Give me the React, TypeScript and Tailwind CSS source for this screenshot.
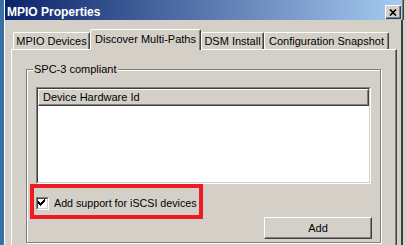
import React from "react"

const raised =
  "border-t border-l border-t-white border-l-white border-r border-b border-r-[#404040] border-b-[#404040] shadow-[inset_-1px_-1px_0_#808080]"

function CheckMark() {
  // classic 7x7 check glyph
  const rows = [
    [6, 1],
    [5, 2],
    [0, 1, 4, 3],
    [0, 2, 3, 3],
    [0, 5],
    [1, 3],
    [2, 1],
  ]
  return (
    <svg width="9" height="9" viewBox="0 0 9 9" shapeRendering="crispEdges">
      {rows.map((r, y) => {
        const rects = []
        for (let i = 0; i < r.length; i += 2) {
          rects.push(<rect key={i} x={r[i] + 1} y={y + 1} width={r[i + 1]} height={1} fill="#000" />)
        }
        return <g key={y}>{rects}</g>
      })}
    </svg>
  )
}

function Tab({ label, width, selected }: { label: string; width: string; selected?: boolean }) {
  if (selected) {
    return (
      <div
        className={`${width} h-[21px] -mb-[1px] relative z-10 bg-[#d4d0c8] border-t border-l border-white border-r border-r-[#404040] shadow-[inset_-1px_0_0_#808080] rounded-t-[2px] flex justify-center pt-[3px] whitespace-nowrap`}
      >
        {label}
      </div>
    )
  }
  return (
    <div
      className={`${width} h-[17px] bg-[#d4d0c8] border-t border-l border-white border-r border-r-[#404040] shadow-[inset_-1px_0_0_#808080] rounded-t-[2px] flex justify-center pt-[2px] whitespace-nowrap`}
    >
      {label}
    </div>
  )
}

export default function App() {
  return (
    <div className="w-[406px] h-[245px] overflow-hidden flex flex-col bg-[#d4d0c8] text-[11px] leading-[13px] text-black font-['Liberation_Sans',Arial,sans-serif]">
      {/* title bar */}
      <div className="h-[20px] w-[406px] shrink-0 flex">
        <div className="w-[4px] bg-[#3a6ea5]" />
        <div className="w-[1px] bg-white" />
        <div className="w-[397px] pt-[4px] pl-[2px] pr-[1px] flex items-center bg-[linear-gradient(to_right,#0a246a,#a6caf0)]">
          <span className="flex-1 text-white font-bold text-[12px] leading-[14px]">MPIO Properties</span>
          <div className="w-[16px] h-[14px] shrink-0 bg-[#d4d0c8] shadow-[inset_1px_1px_0_#fff,inset_-1px_-1px_0_#404040,inset_-2px_-2px_0_#808080] flex items-center justify-center">
            <svg width="8" height="7" viewBox="0 0 8 7" className="block w-[8px] h-[7px] shrink-0">
              <path d="M1 0.5L7 6.5M7 0.5L1 6.5" stroke="#000" strokeWidth="1.7" />
            </svg>
          </div>
        </div>
        <div className="w-[1px] bg-[#808080]" />
        <div className="w-[1px] bg-[#404040]" />
        <div className="flex-1 bg-[#d4d0c8]" />
      </div>

      <div className="flex-1 flex">
        <div className="w-[4px] shrink-0 bg-[#3a6ea5]" />
        <div className="w-[399px] shrink-0 flex flex-col border-l border-white border-r-2 border-r-[#404040] pl-[6px] pr-[4px]">
          {/* tabs */}
          <div className="mt-[9px] h-[20px] flex items-end pl-[2px]">
            <Tab label="MPIO Devices" width="w-[77px]" />
            <Tab label="Discover Multi-Paths" width="w-[111px]" selected />
            <Tab label="DSM Install" width="w-[63px]" />
            <Tab label="Configuration Snapshot" width="w-[125px]" />
          </div>

          {/* tab page */}
          <div className="flex-1 flex flex-col border-t border-l border-white border-r border-r-[#404040] shadow-[inset_-1px_0_0_#808080]">
            <div className="relative mt-[19px] ml-[14px] mr-[15px] border border-[#808080] shadow-[1px_1px_0_#fff,inset_1px_1px_0_#fff] flex flex-col pb-[3px]">
              <span className="absolute -top-[7px] left-[6px] px-[1px] bg-[#d4d0c8]">SPC-3 compliant</span>

              {/* list view */}
              <div className="mt-[17px] mx-[9px] h-[97px] border border-t-[#808080] border-l-[#808080] border-r-white border-b-white">
                <div className="h-full flex flex-col border border-t-[#404040] border-l-[#404040] border-r-[#d4d0c8] border-b-[#d4d0c8] bg-white">
                  <div className={`h-[17px] shrink-0 bg-[#d4d0c8] flex items-center pl-[4px] ${raised}`}>
                    Device Hardware Id
                  </div>
                  <div className="flex-1" />
                </div>
              </div>

              {/* highlighted checkbox */}
              <div className="ml-[3px] w-[173px] h-[35px] border-[4px] border-[#ed1c24] flex items-center pl-[2px] pt-[4px]">
                <div className="w-[13px] h-[13px] shrink-0 border border-t-[#808080] border-l-[#808080] border-r-white border-b-white">
                  <div className="w-full h-full bg-white border border-t-[#404040] border-l-[#404040] border-r-[#d4d0c8] border-b-[#d4d0c8]">
                    <div className="-ml-[1px] -mt-[1px]">
                      <CheckMark />
                    </div>
                  </div>
                </div>
                <span className="ml-[5px] whitespace-nowrap text-[10.7px]">Add support for iSCSI devices</span>
              </div>

              <div
                className={`self-end -mt-[2px] mr-[8px] w-[108px] h-[22px] bg-[#d4d0c8] flex items-center justify-center ${raised}`}
              >
                Add
              </div>
            </div>
          </div>
        </div>
        <div className="flex-1 bg-[#d4d0c8]" />
      </div>
    </div>
  )
}
